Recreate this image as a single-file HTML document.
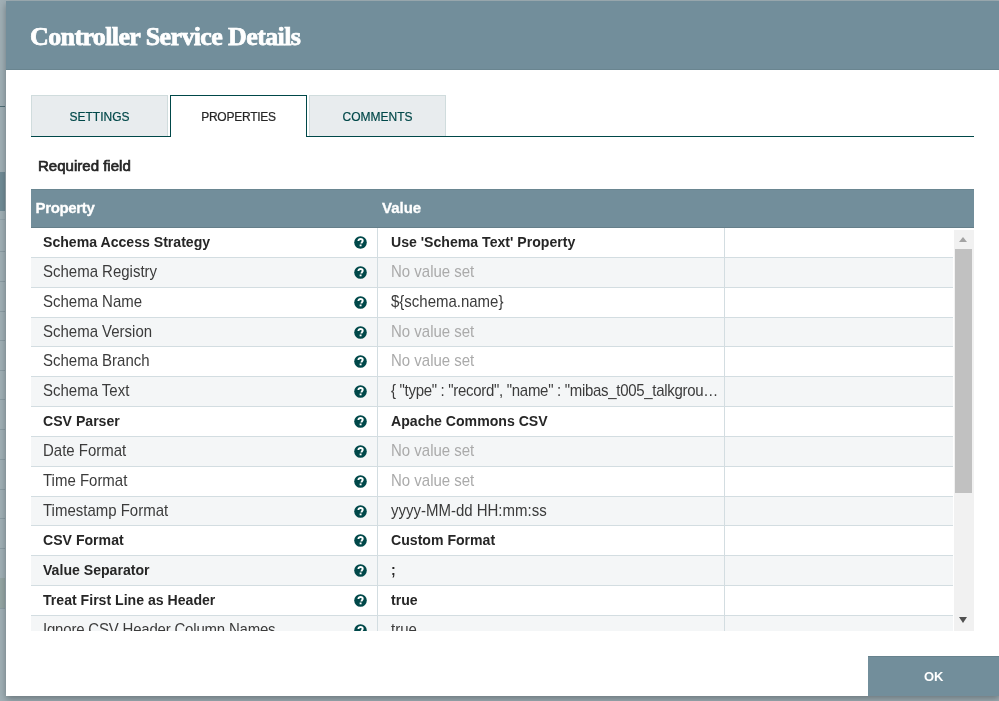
<!DOCTYPE html>
<html><head><meta charset="utf-8">
<style>
*{box-sizing:border-box;margin:0;padding:0}
html,body{-webkit-font-smoothing:antialiased;width:999px;height:701px;overflow:hidden;background:#a1b0b6;font-family:"Liberation Sans",sans-serif;color:#262626}
div{position:absolute}
#bgl{display:none}
#bgb{display:none}
.bgln{left:0;width:5px}
#dlg{left:6px;top:1px;width:994px;height:695px;background:#fff;box-shadow:0 3px 7px rgba(20,30,35,.38)}
#hdr{left:6px;top:1px;width:993px;height:69px;background:#728e9b;border-bottom:1px solid #6a8590}
#title{left:30px;top:21px;font-family:"Liberation Serif",serif;font-weight:bold;font-size:26px;color:#fff;white-space:nowrap;line-height:32px;-webkit-text-stroke:0.75px #fff;letter-spacing:-0.62px}
.tab{top:95px;height:41px;background:#e8ecee;border:1px solid #d0dcdd;border-bottom:none;font-size:12px;color:#004849;text-align:center}
.tab span{position:absolute;left:0;right:0;top:14px;line-height:14px;-webkit-text-stroke:0.2px #004849}
.tab.sel span{-webkit-text-stroke:0.2px #262626}
.tab.sel{background:#fff;border:1px solid #004849;border-bottom:none;color:#262626;height:42px;z-index:2}
#tabline{left:31px;top:136px;width:943px;height:1px;background:#004849}
#req{left:38px;top:157px;font-size:15.5px;color:#262626;-webkit-text-stroke:0.7px #262626;line-height:17px;white-space:nowrap;transform-origin:0 0;transform:scaleX(0.97)}
#ghdr{left:31px;top:189px;width:943px;height:39px;background:#728e9b;border-top:1px solid #6a8691;border-bottom:1px solid #657f8a}
.ht{top:199px;color:#fff;font-weight:bold;font-size:15px;line-height:17px;white-space:nowrap;letter-spacing:-0.35px;-webkit-text-stroke:0.3px #fff}
#grid{left:31px;top:228px;width:922px;height:403px;overflow:hidden}
#root{left:0;top:0;width:999px;height:701px;will-change:transform}
.row{left:0;width:922px;border-bottom:1px solid #d3dde1;background:#fff}
.row.odd{background:#f4f6f7}
.nm{left:12px;top:5px;font-size:15.7px;line-height:17px;white-space:nowrap;color:#3b3b3b;transform-origin:0 0;transform:scaleX(0.955)}
.nm.b{color:#262626;font-weight:bold;font-size:14.1px;top:6px;transform:none}
.help{left:323px;top:8px;width:13px;height:13px}
.help svg{display:block}
.val{left:360px;top:5px;font-size:15.7px;line-height:17px;white-space:nowrap;color:#3b3b3b;transform-origin:0 0;transform:scaleX(0.955)}
.val.b{font-weight:bold;color:#262626;font-size:14.1px;top:6px;transform:none}
.val.nv{color:#aaa}
.vline{top:228px;width:1px;height:403px;background:#d3dde1}
#sbtrack{left:954px;top:230px;width:20px;height:401px;background:#f1f1f1}
#sbthumb{left:955px;top:249px;width:17px;height:244px;background:#c1c1c1}
#sbup{left:959px;top:237px;width:0;height:0;border-left:4.8px solid transparent;border-right:4.8px solid transparent;border-bottom:5px solid #a3a3a3}
#sbdown{left:959px;top:617px;width:0;height:0;border-left:4.8px solid transparent;border-right:4.8px solid transparent;border-top:6px solid #505050}
#ok{left:868px;top:656px;width:140px;height:40px;background:#728e9b;border-top:1px solid #67828d;color:#fff;font-weight:bold;font-size:13px;line-height:15px;padding-top:12px;padding-left:56px;white-space:nowrap}

</style></head><body>
<div id="root"><div id="bgl"></div><div id="bgb"></div>
<div class="bgln" style="top:106px;height:1px;background:#4f6d75"></div>
<div class="bgln" style="top:172px;height:39px;background:#718c96"></div>
<div class="bgln" style="top:219px;height:1px;background:#93a4ab"></div><div class="bgln" style="top:251px;height:1px;background:#8c9da4"></div><div class="bgln" style="top:281px;height:1px;background:#8c9da4"></div><div class="bgln" style="top:311px;height:1px;background:#8c9da4"></div><div class="bgln" style="top:340px;height:1px;background:#8c9da4"></div><div class="bgln" style="top:370px;height:1px;background:#8c9da4"></div><div class="bgln" style="top:399px;height:1px;background:#8c9da4"></div><div class="bgln" style="top:429px;height:1px;background:#8c9da4"></div><div class="bgln" style="top:459px;height:1px;background:#8c9da4"></div><div class="bgln" style="top:489px;height:1px;background:#8c9da4"></div><div class="bgln" style="top:518px;height:1px;background:#8c9da4"></div><div class="bgln" style="top:548px;height:1px;background:#8c9da4"></div><div class="bgln" style="top:578px;height:30px;background:#95a6a4"></div><div class="bgln" style="top:608px;height:1px;background:#8c9da4"></div>
<div id="dlg"></div>
<div id="hdr"></div>
<div id="title">Controller Service Details</div>
<div class="tab" style="left:31px;width:137px"><span>SETTINGS</span></div>
<div class="tab sel" style="left:170px;width:137px"><span style="letter-spacing:-0.25px">PROPERTIES</span></div>
<div class="tab" style="left:309px;width:137px"><span>COMMENTS</span></div>
<div id="tabline"></div>
<div id="req">Required field</div>
<div id="ghdr"></div>
<div class="ht" style="left:35.5px">Property</div>
<div class="ht" style="left:382px;letter-spacing:0">Value</div>
<div id="grid">
<div class="row" style="top:0px;height:30px"><div class="nm b">Schema Access Strategy</div><div class="help"><svg width="13" height="13" viewBox="0 0 13 13"><circle cx="6.5" cy="6.5" r="6.3" fill="#004849"/><path d="M4.4 5.1 C4.4 3.7 5.4 3.0 6.6 3.0 C7.8 3.0 8.7 3.8 8.7 4.8 C8.7 6.1 7.4 6.2 7.4 7.6" stroke="#fff" stroke-width="1.9" fill="none"/><rect x="5.65" y="8.5" width="1.9" height="1.8" fill="#fff"/></svg></div><div class="val b">Use &#x27;Schema Text&#x27; Property</div></div>
<div class="row odd" style="top:30px;height:30px"><div class="nm">Schema Registry</div><div class="help"><svg width="13" height="13" viewBox="0 0 13 13"><circle cx="6.5" cy="6.5" r="6.3" fill="#004849"/><path d="M4.4 5.1 C4.4 3.7 5.4 3.0 6.6 3.0 C7.8 3.0 8.7 3.8 8.7 4.8 C8.7 6.1 7.4 6.2 7.4 7.6" stroke="#fff" stroke-width="1.9" fill="none"/><rect x="5.65" y="8.5" width="1.9" height="1.8" fill="#fff"/></svg></div><div class="val nv">No value set</div></div>
<div class="row" style="top:60px;height:30px"><div class="nm">Schema Name</div><div class="help"><svg width="13" height="13" viewBox="0 0 13 13"><circle cx="6.5" cy="6.5" r="6.3" fill="#004849"/><path d="M4.4 5.1 C4.4 3.7 5.4 3.0 6.6 3.0 C7.8 3.0 8.7 3.8 8.7 4.8 C8.7 6.1 7.4 6.2 7.4 7.6" stroke="#fff" stroke-width="1.9" fill="none"/><rect x="5.65" y="8.5" width="1.9" height="1.8" fill="#fff"/></svg></div><div class="val ">${schema.name}</div></div>
<div class="row odd" style="top:90px;height:29px"><div class="nm">Schema Version</div><div class="help"><svg width="13" height="13" viewBox="0 0 13 13"><circle cx="6.5" cy="6.5" r="6.3" fill="#004849"/><path d="M4.4 5.1 C4.4 3.7 5.4 3.0 6.6 3.0 C7.8 3.0 8.7 3.8 8.7 4.8 C8.7 6.1 7.4 6.2 7.4 7.6" stroke="#fff" stroke-width="1.9" fill="none"/><rect x="5.65" y="8.5" width="1.9" height="1.8" fill="#fff"/></svg></div><div class="val nv">No value set</div></div>
<div class="row" style="top:119px;height:30px"><div class="nm">Schema Branch</div><div class="help"><svg width="13" height="13" viewBox="0 0 13 13"><circle cx="6.5" cy="6.5" r="6.3" fill="#004849"/><path d="M4.4 5.1 C4.4 3.7 5.4 3.0 6.6 3.0 C7.8 3.0 8.7 3.8 8.7 4.8 C8.7 6.1 7.4 6.2 7.4 7.6" stroke="#fff" stroke-width="1.9" fill="none"/><rect x="5.65" y="8.5" width="1.9" height="1.8" fill="#fff"/></svg></div><div class="val nv">No value set</div></div>
<div class="row odd" style="top:149px;height:30px"><div class="nm">Schema Text</div><div class="help"><svg width="13" height="13" viewBox="0 0 13 13"><circle cx="6.5" cy="6.5" r="6.3" fill="#004849"/><path d="M4.4 5.1 C4.4 3.7 5.4 3.0 6.6 3.0 C7.8 3.0 8.7 3.8 8.7 4.8 C8.7 6.1 7.4 6.2 7.4 7.6" stroke="#fff" stroke-width="1.9" fill="none"/><rect x="5.65" y="8.5" width="1.9" height="1.8" fill="#fff"/></svg></div><div class="val " style="letter-spacing:-0.31px">{ &quot;type&quot; : &quot;record&quot;, &quot;name&quot; : &quot;mibas_t005_talkgrou…</div></div>
<div class="row" style="top:179px;height:30px"><div class="nm b">CSV Parser</div><div class="help"><svg width="13" height="13" viewBox="0 0 13 13"><circle cx="6.5" cy="6.5" r="6.3" fill="#004849"/><path d="M4.4 5.1 C4.4 3.7 5.4 3.0 6.6 3.0 C7.8 3.0 8.7 3.8 8.7 4.8 C8.7 6.1 7.4 6.2 7.4 7.6" stroke="#fff" stroke-width="1.9" fill="none"/><rect x="5.65" y="8.5" width="1.9" height="1.8" fill="#fff"/></svg></div><div class="val b">Apache Commons CSV</div></div>
<div class="row odd" style="top:209px;height:30px"><div class="nm">Date Format</div><div class="help"><svg width="13" height="13" viewBox="0 0 13 13"><circle cx="6.5" cy="6.5" r="6.3" fill="#004849"/><path d="M4.4 5.1 C4.4 3.7 5.4 3.0 6.6 3.0 C7.8 3.0 8.7 3.8 8.7 4.8 C8.7 6.1 7.4 6.2 7.4 7.6" stroke="#fff" stroke-width="1.9" fill="none"/><rect x="5.65" y="8.5" width="1.9" height="1.8" fill="#fff"/></svg></div><div class="val nv">No value set</div></div>
<div class="row" style="top:239px;height:30px"><div class="nm">Time Format</div><div class="help"><svg width="13" height="13" viewBox="0 0 13 13"><circle cx="6.5" cy="6.5" r="6.3" fill="#004849"/><path d="M4.4 5.1 C4.4 3.7 5.4 3.0 6.6 3.0 C7.8 3.0 8.7 3.8 8.7 4.8 C8.7 6.1 7.4 6.2 7.4 7.6" stroke="#fff" stroke-width="1.9" fill="none"/><rect x="5.65" y="8.5" width="1.9" height="1.8" fill="#fff"/></svg></div><div class="val nv">No value set</div></div>
<div class="row odd" style="top:269px;height:29px"><div class="nm">Timestamp Format</div><div class="help"><svg width="13" height="13" viewBox="0 0 13 13"><circle cx="6.5" cy="6.5" r="6.3" fill="#004849"/><path d="M4.4 5.1 C4.4 3.7 5.4 3.0 6.6 3.0 C7.8 3.0 8.7 3.8 8.7 4.8 C8.7 6.1 7.4 6.2 7.4 7.6" stroke="#fff" stroke-width="1.9" fill="none"/><rect x="5.65" y="8.5" width="1.9" height="1.8" fill="#fff"/></svg></div><div class="val ">yyyy-MM-dd HH:mm:ss</div></div>
<div class="row" style="top:298px;height:30px"><div class="nm b">CSV Format</div><div class="help"><svg width="13" height="13" viewBox="0 0 13 13"><circle cx="6.5" cy="6.5" r="6.3" fill="#004849"/><path d="M4.4 5.1 C4.4 3.7 5.4 3.0 6.6 3.0 C7.8 3.0 8.7 3.8 8.7 4.8 C8.7 6.1 7.4 6.2 7.4 7.6" stroke="#fff" stroke-width="1.9" fill="none"/><rect x="5.65" y="8.5" width="1.9" height="1.8" fill="#fff"/></svg></div><div class="val b">Custom Format</div></div>
<div class="row odd" style="top:328px;height:30px"><div class="nm b">Value Separator</div><div class="help"><svg width="13" height="13" viewBox="0 0 13 13"><circle cx="6.5" cy="6.5" r="6.3" fill="#004849"/><path d="M4.4 5.1 C4.4 3.7 5.4 3.0 6.6 3.0 C7.8 3.0 8.7 3.8 8.7 4.8 C8.7 6.1 7.4 6.2 7.4 7.6" stroke="#fff" stroke-width="1.9" fill="none"/><rect x="5.65" y="8.5" width="1.9" height="1.8" fill="#fff"/></svg></div><div class="val b">;</div></div>
<div class="row" style="top:358px;height:30px"><div class="nm b">Treat First Line as Header</div><div class="help"><svg width="13" height="13" viewBox="0 0 13 13"><circle cx="6.5" cy="6.5" r="6.3" fill="#004849"/><path d="M4.4 5.1 C4.4 3.7 5.4 3.0 6.6 3.0 C7.8 3.0 8.7 3.8 8.7 4.8 C8.7 6.1 7.4 6.2 7.4 7.6" stroke="#fff" stroke-width="1.9" fill="none"/><rect x="5.65" y="8.5" width="1.9" height="1.8" fill="#fff"/></svg></div><div class="val b">true</div></div>
<div class="row odd" style="top:388px;height:30px"><div class="nm" style="letter-spacing:-0.2px">Ignore CSV Header Column Names</div><div class="help"><svg width="13" height="13" viewBox="0 0 13 13"><circle cx="6.5" cy="6.5" r="6.3" fill="#004849"/><path d="M4.4 5.1 C4.4 3.7 5.4 3.0 6.6 3.0 C7.8 3.0 8.7 3.8 8.7 4.8 C8.7 6.1 7.4 6.2 7.4 7.6" stroke="#fff" stroke-width="1.9" fill="none"/><rect x="5.65" y="8.5" width="1.9" height="1.8" fill="#fff"/></svg></div><div class="val ">true</div></div>
</div>
<div class="vline" style="left:377px"></div>
<div class="vline" style="left:724px"></div>
<div id="sbtrack"></div>
<div id="sbthumb"></div>
<div id="sbup"></div>
<div id="sbdown"></div>
<div id="ok">OK</div>
</div></body></html>
